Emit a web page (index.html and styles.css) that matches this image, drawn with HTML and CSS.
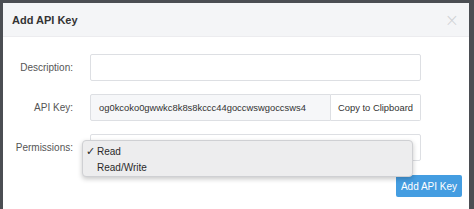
FILE: index.html
```html
<!DOCTYPE html>
<html lang="en">
<head>
    <meta charset="UTF-8">
    <title>Add API Key</title>
    <link rel="stylesheet" href="styles.css">
</head>
<body>
    <div class="modal">
        <div class="modal-header">
            <h4>Add API Key</h4>
            <span class="close">&times;</span>
        </div>
        <div class="modal-body">
            <div class="form-row">
                <label>Description:</label>
                <div class="input"></div>
            </div>
            <div class="form-row">
                <label>API Key:</label>
                <div class="input-group">
                    <div class="input readonly">og0kcoko0gwwkc8k8s8kccc44goccwswgoccsws4</div>
                    <div class="copy-btn">Copy to Clipboard</div>
                </div>
            </div>
            <div class="form-row">
                <label>Permissions:</label>
                <div class="select-wrap">
                    <div class="input"></div>
                    <div class="select-menu">
                        <div class="option"><span class="check">&#10003;</span>Read</div>
                        <div class="option">Read/Write</div>
                    </div>
                </div>
            </div>
        </div>
        <div class="modal-footer">
            <button class="btn-primary">Add API Key</button>
        </div>
    </div>
</body>
</html>
```

FILE: styles.css
```css
body {
    margin: 0;
    background: #4b4e53;
    font-family: "Liberation Sans", Arial, sans-serif;
    font-size: 10px;
    color: #333333;
    height: 209px;
    overflow: hidden;
}
.modal {
    margin: 3px 5px 0 3px;
    background: #ffffff;
    height: 206px;
}
.modal-header {
    height: 33px;
    background: #f4f5f7;
    border-bottom: 1px solid #ececef;
    display: flex;
    align-items: center;
    justify-content: space-between;
    padding: 0 9px 0 9px;
}
.modal-header h4 {
    margin: 0;
    font-size: 11px;
    font-weight: bold;
    color: #333333;
}
.close {
    font-family: "DejaVu Sans", sans-serif;
    font-size: 17px;
    font-weight: 300;
    color: #cfd1d4;
    margin-right: 1px;
}
.modal-body {
    padding-top: 17px;
    display: flex;
    flex-direction: column;
    gap: 13px;
}
.form-row {
    display: grid;
    grid-template-columns: 70px 331px;
    column-gap: 17px;
    align-items: center;
}
.form-row label {
    text-align: right;
    color: #555555;
}
.input {
    height: 25px;
    border: 1px solid #dddfe3;
    border-radius: 2px;
    background: #ffffff;
    box-sizing: content-box;
    display: flex;
    align-items: center;
    padding-left: 7px;
}
.input-group {
    display: flex;
}
.input-group .input {
    flex: 1;
    border-radius: 2px 0 0 2px;
}
.input.readonly {
    background: #f6f7f9;
    color: #333333;
    font-size: 9.4px;
    padding-left: 8px;
}
.copy-btn {
    width: 89px;
    height: 25px;
    border: 1px solid #dddfe3;
    border-left: none;
    border-radius: 0 2px 2px 0;
    display: flex;
    align-items: center;
    justify-content: center;
    color: #333333;
    font-size: 9.4px;
}
.select-wrap {
    position: relative;
}
.select-wrap .input {
    height: 25px;
}
.select-menu {
    position: absolute;
    left: -8px;
    top: 6px;
    width: 329px;
    height: 35px;
    background: #ededee;
    border: 1px solid #cfd0d3;
    border-radius: 4px;
    box-shadow: 0 2px 5px rgba(0, 0, 0, 0.22);
    padding-top: 0;
    box-sizing: content-box;
}
.option {
    height: 16px;
    line-height: 16px;
    margin-top: 3px;
    padding-left: 14px;
    position: relative;
    color: #2a2a2a;
}
.option + .option {
    margin-top: 0;
}
.check {
    position: absolute;
    left: 3px;
    font-family: "DejaVu Sans", sans-serif;
    font-size: 11px;
    font-weight: bold;
}
.modal-footer {
    display: flex;
    justify-content: flex-end;
    padding: 14px 7px 0 0;
}
.btn-primary {
    width: 66px;
    height: 22px;
    padding: 0;
    border: none;
    border-radius: 2px;
    background: #449de1;
    color: #ffffff;
    font-family: "Liberation Sans", Arial, sans-serif;
    font-size: 10px;
}
```
